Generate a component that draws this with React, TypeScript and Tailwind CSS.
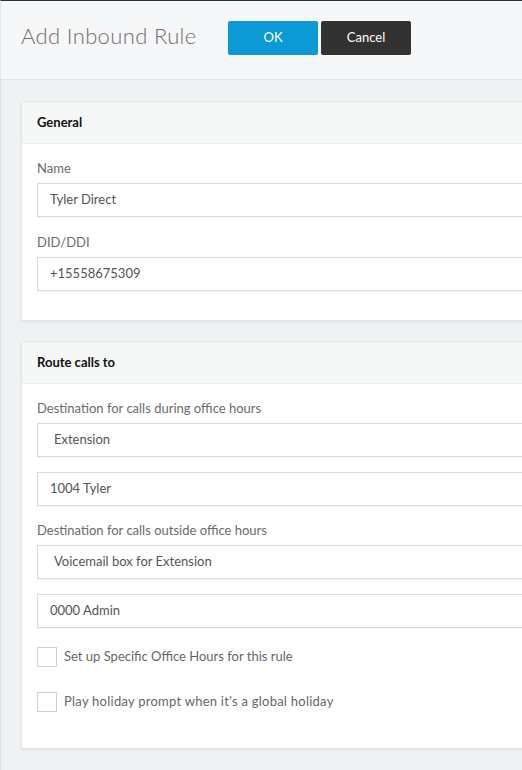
import React from "react";

function Field({ label, children }: { label?: string; children: React.ReactNode }) {
  return (
    <div>
      {label && <div className="text-[13px] leading-[16px] text-[#6b6b6b] mb-[7px]">{label}</div>}
      {children}
    </div>
  );
}

function Input({ value, indent = false }: { value: string; indent?: boolean }) {
  return (
    <div
      className={`h-[34px] border border-[#d9dadb] bg-white flex items-center text-[13px] text-[#555] ${
        indent ? "pl-[16px]" : "pl-[12px]"
      } shadow-[0_1px_1px_rgba(0,0,0,0.04)]`}
    >
      {value}
    </div>
  );
}

function Check({ label, wide = false }: { label: string; wide?: boolean }) {
  return (
    <div className="flex items-center gap-[7px] h-[20px]">
      <div className="w-[20px] h-[20px] border border-[#d0d0d0] bg-white" />
      <span className={`text-[13px] text-[#666] ${wide ? "tracking-[0.25px]" : ""}`}>{label}</span>
    </div>
  );
}

function Card({ title, children }: { title: string; children: React.ReactNode }) {
  return (
    <div className="ml-[20px] w-[600px] bg-white border border-[#e4e5e6] shadow-[0_1px_2px_rgba(0,0,0,0.08)]">
      <div className="h-[42px] bg-[#f6f7f7] border-b border-[#ecedee] flex items-center pl-[15px] text-[13px] font-bold text-[#111]">
        {title}
      </div>
      {children}
    </div>
  );
}

export default function App() {
  return (
    <div
      className="w-[522px] h-[770px] overflow-hidden bg-[#f0f1f2] border-t border-[#2e3032] border-l border-l-[#e3e4e5]"
      style={{ fontFamily: "Lato, 'Open Sans', sans-serif" }}
    >
      <div className="h-[79px] bg-[#f6f7f8] border-b border-[#e1e2e3] flex items-center pl-[20px]">
        <div className="text-[22px] font-light text-[#6e6e6e] tracking-[0.35px] w-[207px] mb-[10px]">Add Inbound Rule</div>
        <div className="flex gap-[3px] mb-[4px]">
          <button className="w-[90px] h-[34px] rounded-[2px] bg-[#0b9ad5] text-white text-[13px]">OK</button>
          <button className="w-[90px] h-[34px] rounded-[2px] bg-[#333232] text-white text-[13px]">Cancel</button>
        </div>
      </div>
      <div className="pt-[21px] flex flex-col gap-[20px]">
        <Card title="General">
          <div className="px-[15px] pt-[16px] pb-[29px] flex flex-col gap-[17px]">
            <Field label="Name">
              <Input value="Tyler Direct" />
            </Field>
            <Field label="DID/DDI">
              <Input value="+15558675309" />
            </Field>
          </div>
        </Card>
        <Card title="Route calls to">
          <div className="px-[15px] pt-[16px] pb-[36px] flex flex-col">
            <Field label="Destination for calls during office hours">
              <Input value="Extension" indent />
            </Field>
            <div className="mt-[15px]">
              <Input value="1004 Tyler" />
            </div>
            <div className="mt-[16px]">
              <Field label="Destination for calls outside office hours">
                <Input value="Voicemail box for Extension" indent />
              </Field>
            </div>
            <div className="mt-[15px]">
              <Input value="0000 Admin" />
            </div>
            <div className="mt-[19px] flex flex-col gap-[25px]">
              <Check label="Set up Specific Office Hours for this rule" />
              <Check label="Play holiday prompt when it's a global holiday" wide />
            </div>
          </div>
        </Card>
      </div>
    </div>
  );
}
